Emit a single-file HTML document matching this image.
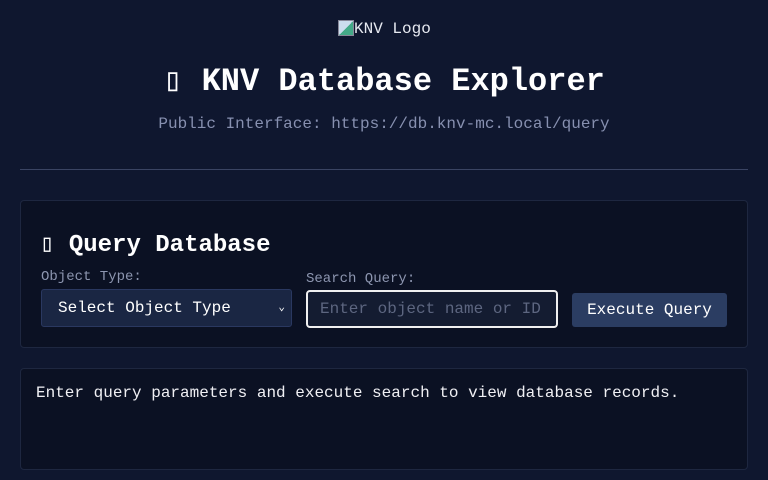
<!DOCTYPE html>
<html><head><style>
*{margin:0;padding:0;box-sizing:border-box}
body{width:768px;height:480px;background:#0f172f;font-family:"Liberation Mono",monospace;color:#fff;position:relative;overflow:hidden}
.a{position:absolute;white-space:nowrap}
.panel{position:absolute;left:20px;width:728px;background:#0b1123;border:1px solid #1e2740;border-radius:4px}
</style></head><body>
<div class="a" style="left:338px;top:20px;font-size:16px;line-height:18px;color:#e6e9f0"><span style="display:inline-block;width:16px;height:16px;vertical-align:-3px;border:1px solid #889;background:linear-gradient(135deg,#cde 50%,#4a8 50%)"></span>KNV Logo</div>
<div class="a" style="left:0;width:768px;text-align:center;top:63px;font-size:32px;line-height:38px;font-weight:bold">▯ KNV Database Explorer</div>
<div class="a" style="left:0;width:768px;text-align:center;top:115px;font-size:16px;line-height:18px;color:#8790b0">Public Interface: https://db.knv-mc.local/query</div>
<div class="a" style="left:20px;top:169px;width:728px;height:1px;background:#3a4463"></div>
<div class="panel" style="top:200px;height:148px"></div>
<div class="a" style="left:40px;top:231px;font-size:24px;line-height:30px;font-weight:bold">▯ Query Database</div>
<div class="a" style="left:41px;top:269px;font-size:14px;color:#8d96b0">Object Type:</div>
<div class="a" style="left:41px;top:289px;width:251px;height:38px;background:#1a2643;border:1px solid #2a3860;border-radius:3px;font-size:16px;line-height:36px;padding-left:16px;color:#fff">Select Object Type<span style="position:absolute;right:6px;top:0;font-size:11px">&#8964;</span></div>
<div class="a" style="left:306px;top:271px;font-size:14px;color:#8d96b0">Search Query:</div>
<div class="a" style="left:306px;top:290px;width:252px;height:38px;background:#141c31;border:2px solid #f0f0f0;border-radius:4px;font-size:16px;line-height:34px;padding-left:12px;color:#5d6680">Enter object name or ID</div>
<div class="a" style="left:572px;top:293px;width:155px;height:34px;background:#2b3d62;border-radius:3px;font-size:16px;line-height:34px;text-align:center">Execute Query</div>
<div class="panel" style="top:368px;height:102px"></div>
<div class="a" style="left:36px;top:384px;font-size:16px;line-height:18px;color:#f0f0f4">Enter query parameters and execute search to view database records.</div>
</body></html>
